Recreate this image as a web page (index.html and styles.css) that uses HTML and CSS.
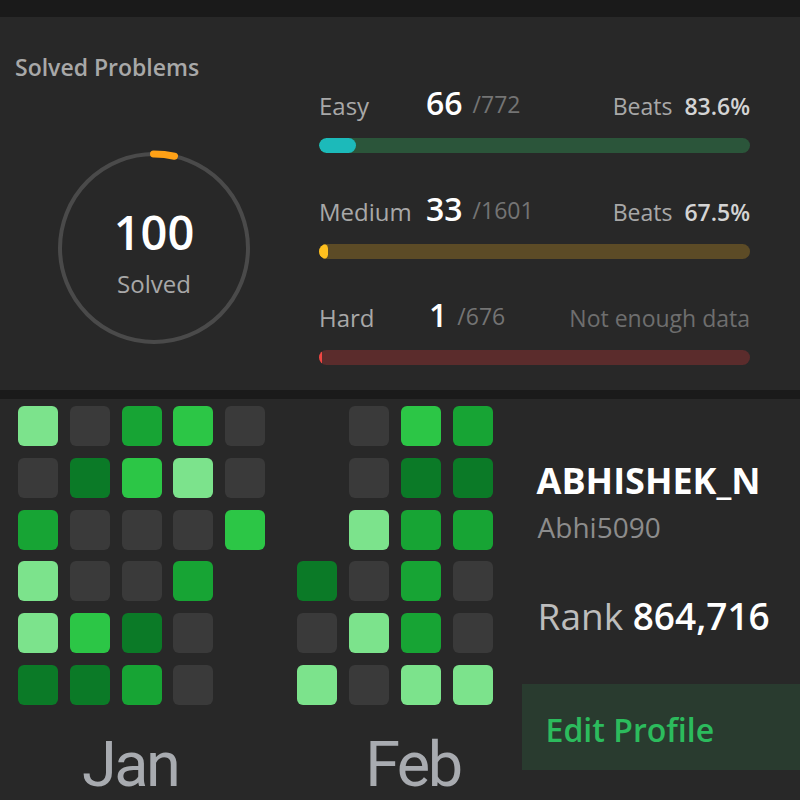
FILE: index.html
```html
<!DOCTYPE html>
<html lang="en">
<head>
<meta charset="utf-8">
<title>Profile</title>
<link rel="stylesheet" href="styles.css">
</head>
<body>
<div class="topbar"></div>
<section class="card">
  <div class="left">
    <h2 class="title">Solved Problems</h2>
    <div class="ring">
      <svg class="ring-svg" width="196" height="196" viewBox="0 0 196 196">
        <circle cx="98" cy="98" r="94" fill="none" stroke="#4a4a4a" stroke-width="4"/>
        <path d="M 97.5 4 A 94 94 0 0 1 118.5 6.26" fill="none" stroke="#ffa116" stroke-width="7" stroke-linecap="round"/>
      </svg>
      <div class="ring-text">
        <div class="ring-num">100</div>
        <div class="ring-lbl">Solved</div>
      </div>
    </div>
  </div>
  <div class="stats">
    <div class="stat">
      <div class="stat-head">
        <span class="lvl">Easy</span><span class="cnt">66</span><span class="tot">/772</span>
        <span class="beats">Beats <b>83.6%</b></span>
      </div>
      <div class="bar easy"><div class="fill" style="width:8.5%"></div></div>
    </div>
    <div class="stat">
      <div class="stat-head">
        <span class="lvl">Medium</span><span class="cnt">33</span><span class="tot">/1601</span>
        <span class="beats">Beats <b>67.5%</b></span>
      </div>
      <div class="bar medium"><div class="fill" style="width:2.1%"></div></div>
    </div>
    <div class="stat">
      <div class="stat-head">
        <span class="lvl">Hard</span><span class="cnt one">1</span><span class="tot">/676</span>
        <span class="beats none">Not enough data</span>
      </div>
      <div class="bar hard"><div class="fill" style="width:3px"></div></div>
    </div>
  </div>
</section>
<div class="sep"></div>
<section class="profile">
  <div class="heatmap">
    <div class="month">
      <div class="grid jan">
        <i class="c l"></i><i class="c g"></i><i class="c m"></i><i class="c b"></i><i class="c g"></i>
        <i class="c g"></i><i class="c d"></i><i class="c b"></i><i class="c l"></i><i class="c g"></i>
        <i class="c m"></i><i class="c g"></i><i class="c g"></i><i class="c g"></i><i class="c b"></i>
        <i class="c l"></i><i class="c g"></i><i class="c g"></i><i class="c m"></i><i class="c x"></i>
        <i class="c l"></i><i class="c b"></i><i class="c d"></i><i class="c g"></i><i class="c x"></i>
        <i class="c d"></i><i class="c d"></i><i class="c m"></i><i class="c g"></i><i class="c x"></i>
      </div>
      <div class="mlabel jan-l">Jan</div>
    </div>
    <div class="month">
      <div class="grid feb">
        <i class="c x"></i><i class="c g"></i><i class="c b"></i><i class="c m"></i>
        <i class="c x"></i><i class="c g"></i><i class="c d"></i><i class="c d"></i>
        <i class="c x"></i><i class="c l"></i><i class="c m"></i><i class="c m"></i>
        <i class="c d"></i><i class="c g"></i><i class="c m"></i><i class="c g"></i>
        <i class="c g"></i><i class="c l"></i><i class="c m"></i><i class="c g"></i>
        <i class="c l"></i><i class="c g"></i><i class="c l"></i><i class="c l"></i>
      </div>
      <div class="mlabel feb-l">Feb</div>
    </div>
  </div>
  <div class="info">
    <div class="name">ABHISHEK_N</div>
    <div class="handle">Abhi5090</div>
    <div class="rank">Rank <b>864,716</b></div>
    <div class="edit">Edit Profile</div>
  </div>
</section>
</body>
</html>
```

FILE: styles.css
```css
html, body {
  margin: 0;
  padding: 0;
}
body {
  width: 800px;
  height: 800px;
  overflow: hidden;
  background: #1a1a1a;
  font-family: "Open Sans", "Noto Sans", "Liberation Sans", sans-serif;
  color: #eff1f6;
}
.topbar {
  height: 17px;
  background: #1a1a1a;
}
.card {
  height: 373px;
  box-sizing: border-box;
  background: #282828;
  padding: 0 50px 0 15px;
  display: flex;
}
.left {
  width: 304px;
  padding-top: 36px;
}
.title {
  margin: 0;
  font-size: 23px;
  line-height: 28px;
  font-weight: 600;
  color: #a8a8a8;
}
.ring {
  margin: 68.5px 0 0 41px;
  width: 196px;
  height: 196px;
  display: grid;
}
.ring > * {
  grid-area: 1 / 1;
}
.ring-text {
  padding-top: 56px;
  text-align: center;
}
.ring-num {
  font-size: 47px;
  line-height: 52px;
  font-weight: 600;
  color: #ffffff;
}
.ring-lbl {
  margin-top: 11px;
  font-size: 24px;
  line-height: 30px;
  color: #a8a8a8;
}
.stats {
  flex: 1;
  padding-top: 69.6px;
  display: flex;
  flex-direction: column;
  gap: 40px;
}
.stat-head {
  display: flex;
  align-items: baseline;
  height: 32px;
}
.lvl {
  width: 107px;
  font-size: 24px;
  line-height: 24px;
  color: #a8a8a8;
}
.cnt {
  font-size: 32px;
  line-height: 32px;
  font-weight: 600;
  color: #ffffff;
}
.cnt.one {
  padding-left: 3px;
}
.tot {
  align-self: flex-start;
  padding-top: 6px;
  margin-left: 10px;
  font-size: 23px;
  line-height: 23px;
  color: #747474;
}
.beats {
  margin-left: auto;
  font-size: 23px;
  line-height: 23px;
  color: #a8a8a8;
}
.beats b {
  margin-left: 6px;
  font-weight: 600;
  color: #d4d4d4;
}
.beats.none {
  color: #6e6e6e;
}
.bar {
  margin-top: 19px;
  height: 15px;
  border-radius: 8px;
  overflow: hidden;
}
.fill {
  height: 100%;
  border-radius: 8px;
}
.bar.easy { background: #2b553a; }
.bar.easy .fill { background: #1cbaba; }
.bar.medium { background: #5c4b26; }
.bar.medium .fill { background: #ffc01e; }
.bar.hard { background: #5b2c2c; }
.bar.hard .fill { background: #ef4743; border-radius: 8px 0 0 8px; }
.sep {
  height: 9px;
  background: #1a1a1a;
}
.profile {
  height: 401px;
  background: #282828;
  display: flex;
}
.heatmap {
  display: flex;
  gap: 32px;
  padding: 7px 0 0 18px;
}
.grid {
  display: grid;
  grid-template-rows: repeat(6, 40px);
  gap: 11.8px;
}
.grid.jan { grid-template-columns: repeat(5, 40px); }
.grid.feb { grid-template-columns: repeat(4, 40px); }
.c {
  display: block;
  border-radius: 6px;
}
.c.g { background: #3a3a3a; }
.c.l { background: #7ce38c; }
.c.b { background: #2cc646; }
.c.m { background: #17a434; }
.c.d { background: #0b7a27; }
.c.x { background: transparent; }
.mlabel {
  margin-top: 33px;
  font-family: Roboto, "Open Sans", sans-serif;
  font-size: 63px;
  line-height: 54px;
  letter-spacing: -2.5px;
  color: #a8abb0;
}
.jan-l { padding-left: 64px; }
.feb-l { padding-left: 68px; }
.info {
  flex: 1;
  margin-left: 29px;
  padding-top: 59.5px;
}
.name {
  padding-left: 15px;
  font-size: 36px;
  line-height: 44px;
  font-weight: 700;
  color: #ffffff;
}
.handle {
  margin-top: 6.6px;
  padding-left: 16px;
  font-size: 28px;
  line-height: 36px;
  color: #8c8c8c;
}
.rank {
  margin-top: 48.5px;
  padding-left: 16px;
  font-size: 37px;
  line-height: 44px;
  color: #bdbdbd;
}
.rank b {
  font-weight: 600;
  color: #ffffff;
}
.edit {
  margin-top: 46.4px;
  height: 81px;
  padding: 5px 24px 0;
  font-size: 32px;
  line-height: 81px;
  font-weight: 600;
  color: #2cbb5d;
  background: #293b2f;
}
```
